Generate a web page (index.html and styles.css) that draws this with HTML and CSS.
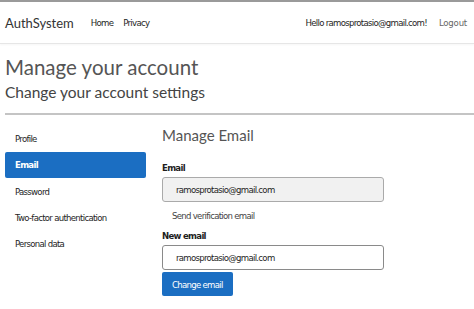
FILE: index.html
```html
<!DOCTYPE html>
<html lang="en">
<head>
  <meta charset="UTF-8">
  <title>Manage Email</title>
  <link rel="stylesheet" href="styles.css">
</head>
<body>
  <header class="navbar">
    <div class="nav-left">
      <span class="brand">AuthSystem</span>
      <a class="nav-link">Home</a>
      <a class="nav-link">Privacy</a>
    </div>
    <div class="nav-right">
      <a class="nav-hello">Hello ramosprotasio@gmail.com!</a>
      <a class="nav-logout">Logout</a>
    </div>
  </header>

  <main class="container">
    <h1>Manage your account</h1>
    <h2>Change your account settings</h2>
    <hr>

    <div class="layout">
      <ul class="side-nav">
        <li><a>Profile</a></li>
        <li><a class="active">Email</a></li>
        <li><a>Password</a></li>
        <li><a>Two-factor authentication</a></li>
        <li><a>Personal data</a></li>
      </ul>

      <section class="content">
        <h3>Manage Email</h3>
        <form>
          <label for="email">Email</label>
          <input id="email" class="field disabled" value="ramosprotasio@gmail.com" disabled>
          <a class="verify">Send verification email</a>

          <label for="newEmail">New email</label>
          <input id="newEmail" class="field" value="ramosprotasio@gmail.com">
          <button type="button" class="btn">Change email</button>
        </form>
      </section>
    </div>
  </main>
</body>
</html>
```

FILE: styles.css
```css
body {
  margin: 0;
  background: #fff;
  color: #1e1e1e;
  font-family: "DejaVu Sans Condensed", "DejaVu Sans", sans-serif;
  font-size: 9.5px;
  letter-spacing: -0.7px;
  border-top: 2px solid #9a9a9a;
}

a {
  color: inherit;
  text-decoration: none;
}

.navbar {
  height: 41px;
  display: flex;
  justify-content: space-between;
  align-items: center;
  padding: 0 7px 0 5px;
  border-bottom: 1px solid #e6e6e6;
  box-shadow: 0 1px 2px rgba(0,0,0,0.04);
}

.nav-left,
.nav-right {
  display: flex;
  align-items: center;
}

.brand {
  font-family: "Lato", sans-serif;
  font-size: 13px;
  letter-spacing: 0;
  color: #333;
  margin-right: 17px;
}

.nav-link {
  margin-right: 10px;
}

.nav-hello {
  margin-right: 12px;
}

.nav-logout {
  color: #666;
  letter-spacing: -0.2px;
}

.container {
  padding: 0 0 0 5px;
}

h1 {
  font-family: "Lato", sans-serif;
  font-weight: normal;
  font-size: 20.5px;
  letter-spacing: 0;
  color: #555;
  margin: 11px 0 4px;
}

h2 {
  font-family: "Lato", sans-serif;
  font-weight: normal;
  font-size: 15.5px;
  letter-spacing: 0;
  color: #444;
  margin: 0;
}

hr {
  border: none;
  border-top: 2px solid #c4c4c4;
  margin: 12px 0 0;
}

.layout {
  display: flex;
  gap: 16px;
  padding-top: 11px;
}

.side-nav {
  list-style: none;
  margin: 0;
  padding: 0;
  width: 141px;
}

.side-nav a {
  display: block;
  line-height: 12px;
  padding: 7px 10px;
  margin-bottom: 0.3px;
}

.side-nav a.active {
  background: #1b6ec2;
  color: #fff;
  font-weight: bold;
  border-radius: 2px;
}

.content {
  width: 222px;
}

h3 {
  font-family: "Lato", sans-serif;
  font-weight: normal;
  font-size: 15px;
  line-height: 18px;
  letter-spacing: 0;
  color: #555;
  margin: 0 0 18px;
}

form label {
  display: block;
  line-height: 12px;
  font-weight: bold;
  margin-bottom: 3px;
}

.field {
  display: block;
  box-sizing: border-box;
  width: 222px;
  height: 25px;
  padding: 0 13px;
  font-family: inherit;
  font-size: 9.5px;
  letter-spacing: -0.7px;
  color: #1e1e1e;
  background: #fff;
  border: 1px solid #8a8a8a;
  border-radius: 3px;
}

.field.disabled {
  background: #f1f1f1;
  border-color: #aaa;
}

.verify {
  display: block;
  line-height: 12px;
  color: #444;
  padding: 8px 10px;
}

.btn {
  display: block;
  font-family: inherit;
  font-size: 9.5px;
  letter-spacing: -0.7px;
  color: #fff;
  background: #1b6ec2;
  border: none;
  border-radius: 2px;
  padding: 0 10px;
  height: 24px;
  margin-top: 2px;
}
```
